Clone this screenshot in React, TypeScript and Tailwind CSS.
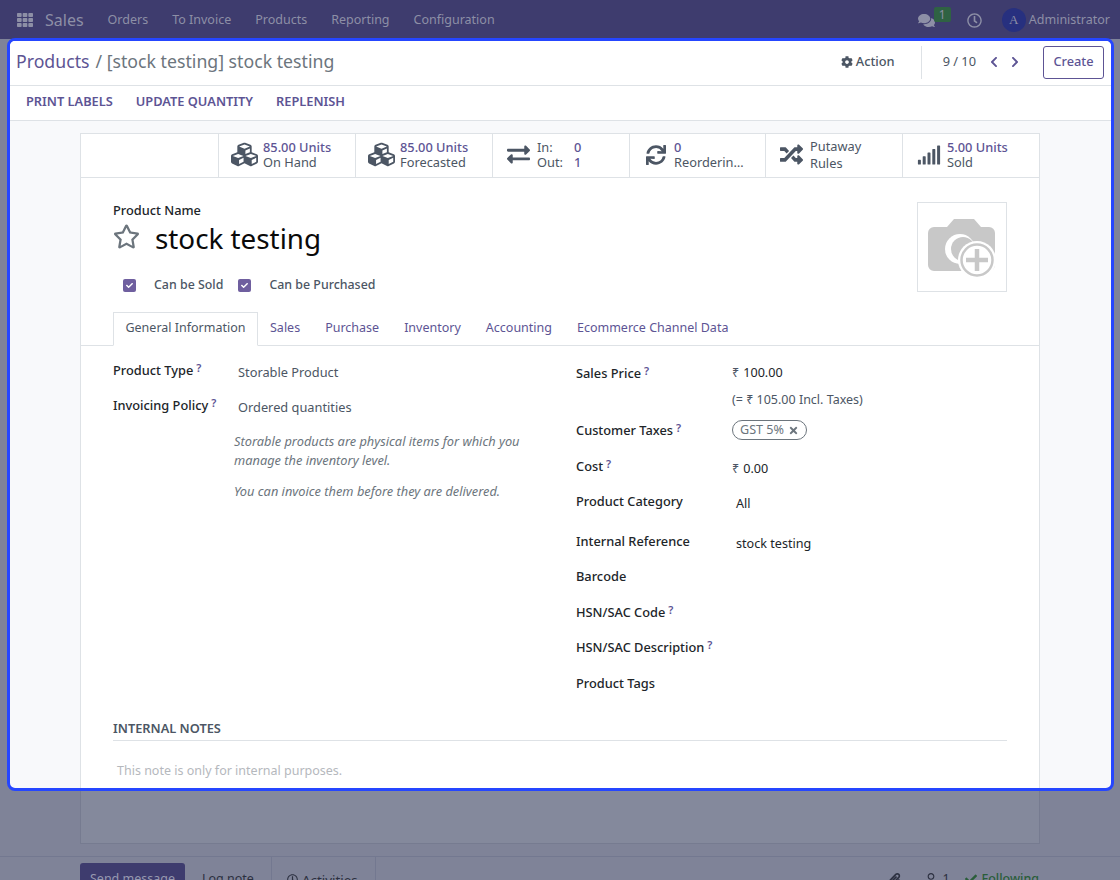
import { FaTh, FaComments, FaRegClock, FaCog, FaChevronLeft, FaChevronRight, FaCubes, FaExchangeAlt, FaSync, FaRandom, FaSignal, FaRegStar, FaCheck, FaTimes, FaPaperclip, FaRegUser } from 'react-icons/fa';

const font = { fontFamily: '"Noto Sans", sans-serif' };

function CameraPlus() {
  return (
    <svg width="70" height="60" viewBox="0 0 70 60" className="ml-[2px] mt-[4px]">
      <path d="M6 8h13l7-8h20l7 8h8a6 6 0 0 1 6 6v32a6 6 0 0 1-6 6H6a6 6 0 0 1-6-6V14a6 6 0 0 1 6-6z" fill="#c8c8c8" />
      <circle cx="32" cy="30" r="15" fill="#fff" />
      <circle cx="35" cy="30" r="12" fill="#c8c8c8" />
      <circle cx="49" cy="41" r="19" fill="#fff" />
      <circle cx="49" cy="41" r="15.5" fill="none" stroke="#c8c8c8" strokeWidth="2.5" />
      <path d="M49 30v22M38 41h22" stroke="#c8c8c8" strokeWidth="4.5" />
    </svg>
  );
}

function Stat({ icon, children }: { icon: React.ReactNode; children: React.ReactNode }) {
  return (
    <div className="flex items-center gap-[5px] border-l border-[#dee2e6] pb-[2px] pl-[12px] text-[12.8px] leading-[15px] text-[#4c5664]">
      <span className="flex w-[27px] shrink-0 justify-center text-[#4c5664]">{icon}</span>
      <div>{children}</div>
    </div>
  );
}

function Help() {
  return <sup className="relative top-[-3px] ml-[3px] text-[11px] font-semibold text-[#5d5494]">?</sup>;
}

function Field({ label, help, h, children }: { label: string; help?: boolean; h: string; children?: React.ReactNode }) {
  return (
    <div className={`flex ${h}`}>
      <div className="w-[156px] shrink-0 font-medium text-[#212529]">
        {label}
        {help && <Help />}
      </div>
      <div className="text-[12.6px] text-[#212529]">{children}</div>
    </div>
  );
}

export default function App() {
  return (
    <div className="relative h-[880px] w-[1120px] overflow-hidden bg-[#7f8398] text-[12.8px]" style={font}>
      {/* dimmed page behind */}
      <div className="flex h-[39px] items-center bg-[#3e3c6e] pt-[1px] text-[12.5px] text-[#8d8fa6]">
        <FaTh className="ml-[17px] text-[16px]" />
        <span className="ml-[12px] text-[16px]">Sales</span>
        <span className="ml-6">Orders</span>
        <span className="ml-6">To Invoice</span>
        <span className="ml-6">Products</span>
        <span className="ml-6">Reporting</span>
        <span className="ml-6">Configuration</span>
        <div className="ml-auto flex items-center pr-[10px]">
          <div className="relative mr-[16px] text-[17px]">
            <FaComments />
            <span className="absolute left-[16px] top-[-5px] rounded-[2px] bg-[#2f6243] px-[5px] text-[12px] leading-[15px]">1</span>
          </div>
          <FaRegClock className="ml-[16px] text-[15px]" />
          <span className="ml-[20px] flex h-[24px] w-[24px] items-center justify-center rounded-full bg-[#27307f] text-[13px]" style={{ fontFamily: '"Liberation Serif", serif' }}>A</span>
          <span className="ml-[3px]">Administrator</span>
        </div>
      </div>
      <div className="mx-[80px] mt-[95px] h-[710px] border border-[#767b90] bg-[#84899c]" />
      <div className="mt-[12px] flex h-[40px] items-start border-t border-[#737890] pl-[80px] text-[12.5px] text-[#2c3040]">
        <span className="mt-[6px] w-[105px] rounded-[3px] bg-[#3e3c6e] py-[7px] text-center text-[#9799b0]">Send message</span>
        <span className="ml-[17px] mr-[17px] mt-[13px]">Log note</span>
        <span className="flex h-full items-start gap-1 border-x border-[#737890] pl-[15px] pr-[17px] pt-[13px] text-[13.4px]">
          <FaRegClock className="mt-[4px] text-[11px]" /> Activities
        </span>
        <div className="ml-auto mr-[81px] mt-[13px] flex items-center">
          <FaPaperclip className="text-[13px]" />
          <FaRegUser className="ml-[24px] text-[12px]" />
          <span className="ml-[5px]">1</span>
          <FaCheck className="ml-[15px] text-[12px] text-[#2a5e3a]" />
          <span className="ml-[5px] font-medium text-[#2a5e3a]">Following</span>
        </div>
      </div>

      {/* highlighted window */}
      <div className="absolute left-[7px] top-[38px] flex h-[753px] w-[1107px] flex-col overflow-hidden rounded-lg border-[3px] border-[#2546ff] bg-[#f8f9fb]">
        <div className="flex h-[45px] shrink-0 items-center border-b border-[#dee2e6] bg-white pb-[3px] pl-[6px] pr-[7px]">
          <span className="text-[17.7px] text-[#5d5494]">Products</span>
          <span className="ml-[6px] text-[17.7px] text-[#6c757d]">/ [stock testing] stock testing</span>
          <div className="ml-auto flex items-center">
            <span className="flex items-center gap-[3px] font-medium text-[#4c5664]"><FaCog className="text-[12px]" /> Action</span>
            <div className="ml-[26px] h-[33px] translate-y-[1px] border-l border-[#dee2e6]" />
            <span className="ml-[21px] text-[#4c5664]">9 / 10</span>
            <FaChevronLeft className="ml-[12px] text-[12px] text-[#5d5494]" />
            <FaChevronRight className="ml-[9px] text-[12px] text-[#5d5494]" />
            <span className="ml-[22px] flex h-[33px] w-[61px] translate-y-[1px] items-center justify-center rounded-[3px] border border-[#5d5494] pb-[1px] font-medium text-[#5d5494]">Create</span>
          </div>
        </div>
        <div className="flex h-[35px] shrink-0 items-center gap-[23px] border-b border-[#dee2e6] bg-white pb-[2px] pl-[16px] font-semibold text-[#5d5494]">
          <span>PRINT LABELS</span>
          <span>UPDATE QUANTITY</span>
          <span>REPLENISH</span>
        </div>

        <div className="ml-[70px] mr-[71px] mt-[12px] flex-1 border-x border-t border-[#dee2e6] bg-white">
          <div className="grid h-[44px] grid-cols-[137px_137px_137px_137px_136px_137px_137px] border-b border-[#dee2e6]">
            <div />
            <Stat icon={<FaCubes className="text-[27px]" />}>
              <div className="font-medium text-[#5d5494]">85.00 Units</div>
              <div>On Hand</div>
            </Stat>
            <Stat icon={<FaCubes className="text-[27px]" />}>
              <div className="font-medium text-[#5d5494]">85.00 Units</div>
              <div>Forecasted</div>
            </Stat>
            <Stat icon={<FaExchangeAlt className="text-[23px]" />}>
              <div className="grid grid-cols-[37px_auto]">
                <span>In:</span><span className="font-medium text-[#5d5494]">0</span>
                <span>Out:</span><span className="font-medium text-[#5d5494]">1</span>
              </div>
            </Stat>
            <Stat icon={<FaSync className="text-[20px]" />}>
              <div className="font-medium text-[#5d5494]">0</div>
              <div>Reorderin…</div>
            </Stat>
            <Stat icon={<FaRandom className="text-[23px]" />}>
              <div className="leading-[17px]">Putaway</div>
              <div className="leading-[17px]">Rules</div>
            </Stat>
            <Stat icon={<FaSignal className="text-[24px]" />}>
              <div className="font-medium text-[#5d5494]">5.00 Units</div>
              <div>Sold</div>
            </Stat>
          </div>

          <div className="flex px-[32px] pt-[24px]">
            <div className="flex-1">
              <div className="font-medium leading-[17px] text-[#212529]">Product Name</div>
              <div className="mt-[1px] flex items-center leading-[36px]">
                <FaRegStar className="mb-[4px] text-[27px] text-[#6c757d]" />
                <span className="ml-[15px] text-[27.8px] text-[#0a0a0a]">stock testing</span>
              </div>
              <div className="mt-[20px] flex items-center pl-[10px] font-medium text-[#4c5664]">
                <span className="flex h-[13px] w-[13px] items-center justify-center rounded-[2px] bg-[#6f5f9f] text-white"><FaCheck className="text-[7px]" /></span>
                <span className="ml-[18px] text-[12.4px]">Can be Sold</span>
                <span className="ml-[15px] flex h-[13px] w-[13px] items-center justify-center rounded-[2px] bg-[#6f5f9f] text-white"><FaCheck className="text-[7px]" /></span>
                <span className="ml-[18px] text-[12.4px]">Can be Purchased</span>
              </div>
            </div>
            <div className="flex h-[90px] w-[90px] items-center justify-center border border-[#dee2e6]">
              <CameraPlus />
            </div>
          </div>

          <div className="mt-[17px] flex h-[34px] items-end border-b border-[#dee2e6] pl-[32px] text-[12.5px] text-[#5d5494]">
            <span className="mb-[-1px] flex h-[34px] w-[145px] items-center justify-center border border-[#dee2e6] border-b-white text-[#4c5664]">General Information</span>
            <span className="ml-[12px] flex h-[33px] items-center">Sales</span>
            <span className="ml-[25px] flex h-[33px] items-center">Purchase</span>
            <span className="ml-[25px] flex h-[33px] items-center">Inventory</span>
            <span className="ml-[25px] flex h-[33px] items-center">Accounting</span>
            <span className="ml-[25px] flex h-[33px] items-center">Ecommerce Channel Data</span>
          </div>

          <div className="flex px-[32px] pt-[15px]">
            <div className="w-[463px] shrink-0">
              <div className="flex h-[35px]">
                <div className="w-[125px] shrink-0 font-medium text-[#212529]">Product Type<Help /></div>
                <div className="mt-[2px] text-[#4c5664]">Storable Product</div>
              </div>
              <div className="flex h-[36px]">
                <div className="w-[125px] shrink-0 font-medium text-[#212529]">Invoicing Policy<Help /></div>
                <div className="mt-[2px] text-[#4c5664]">Ordered quantities</div>
              </div>
              <div className="ml-[121px] italic leading-[19px] text-[#6c757d]">
                <p>Storable products are physical items for which you</p>
                <p>manage the inventory level.</p>
                <p className="mt-[12px]">You can invoice them before they are delivered.</p>
              </div>
            </div>
            <div className="flex-1 pt-[3px]">
              <Field label="Sales Price" help h="h-[26px]"><span className="flex gap-[4px]"><span className="text-[#4c5664]">₹</span>100.00</span></Field>
              <div className="h-[31px] pl-[156px] pt-[1px] text-[12.5px] text-[#4c5664]">(= ₹ 105.00 Incl. Taxes)</div>
              <Field label="Customer Taxes" help h="h-[36px]">
                <span className="mt-[-1px] inline-flex h-[20px] items-center gap-[4px] rounded-full border border-[#6c757d] px-[7px] text-[#6c757d]">GST 5% <FaTimes className="text-[11px]" /></span>
              </Field>
              <Field label="Cost" help h="h-[35px]"><span className="mt-[3px] flex gap-[4px]"><span className="text-[#4c5664]">₹</span>0.00</span></Field>
              <Field label="Product Category" h="h-[40px]"><span className="ml-[4px] mt-[3px] block">All</span></Field>
              <Field label="Internal Reference" h="h-[35px]"><span className="ml-[4px] mt-[3px] block">stock testing</span></Field>
              <Field label="Barcode" h="h-[36px]" />
              <Field label="HSN/SAC Code" help h="h-[35px]" />
              <Field label="HSN/SAC Description" help h="h-[36px]" />
              <Field label="Product Tags" h="h-[36px]" />
            </div>
          </div>

          <div className="mx-[32px] mt-[9px] border-b border-[#dee2e6] pb-[2px] font-semibold text-[#4c5664]">INTERNAL NOTES</div>
          <div className="ml-[36px] mt-[21px] text-[12.5px] text-[#b5b8bd]">This note is only for internal purposes.</div>
        </div>
      </div>
    </div>
  );
}
